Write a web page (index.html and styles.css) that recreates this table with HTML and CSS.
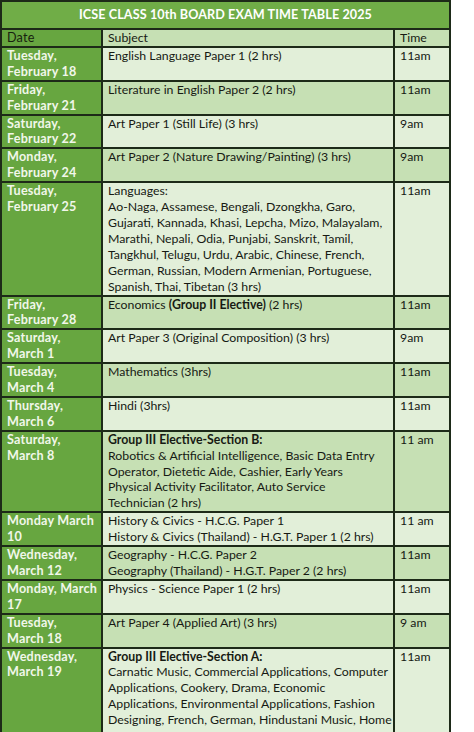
FILE: index.html
```html
<!DOCTYPE html>
<html>
<head>
<meta charset="utf-8">
<link rel="stylesheet" href="styles.css">
</head>
<body>
<table class="tt">
  <colgroup>
    <col class="c-date">
    <col class="c-subj">
    <col class="c-time">
  </colgroup>
  <tr class="title"><th colspan="3">ICSE CLASS 10th BOARD EXAM TIME TABLE 2025</th></tr>
  <tr class="head dark"><td class="date">Date</td><td>Subject</td><td>Time</td></tr>
  <tr class="light"><td class="date">Tuesday,<br>February 18</td><td>English Language Paper 1 (2 hrs)</td><td>11am</td></tr>
  <tr class="dark"><td class="date">Friday,<br>February 21</td><td>Literature in English Paper 2 (2 hrs)</td><td>11am</td></tr>
  <tr class="light"><td class="date">Saturday,<br>February 22</td><td>Art Paper 1 (Still Life) (3 hrs)</td><td>9am</td></tr>
  <tr class="dark"><td class="date">Monday,<br>February 24</td><td>Art Paper 2 (Nature Drawing/Painting) (3 hrs)</td><td>9am</td></tr>
  <tr class="light"><td class="date">Tuesday,<br>February 25</td><td>Languages:<br>Ao-Naga, Assamese, Bengali, Dzongkha, Garo,<br>Gujarati, Kannada, Khasi, Lepcha, Mizo, Malayalam,<br>Marathi, Nepali, Odia, Punjabi, Sanskrit, Tamil,<br>Tangkhul, Telugu, Urdu, Arabic, Chinese, French,<br>German, Russian, Modern Armenian, Portuguese,<br>Spanish, Thai, Tibetan (3 hrs)</td><td>11am</td></tr>
  <tr class="dark"><td class="date">Friday,<br>February 28</td><td>Economics <b>(Group II Elective)</b> (2 hrs)</td><td>11am</td></tr>
  <tr class="light"><td class="date">Saturday,<br>March 1</td><td>Art Paper 3 (Original Composition) (3 hrs)</td><td>9am</td></tr>
  <tr class="dark"><td class="date">Tuesday,<br>March 4</td><td>Mathematics (3hrs)</td><td>11am</td></tr>
  <tr class="light"><td class="date">Thursday,<br>March 6</td><td>Hindi (3hrs)</td><td>11am</td></tr>
  <tr class="dark"><td class="date">Saturday,<br>March 8</td><td><b>Group III Elective-Section B:</b><br>Robotics &amp; Artificial Intelligence, Basic Data Entry<br>Operator, Dietetic Aide, Cashier, Early Years<br>Physical Activity Facilitator, Auto Service<br>Technician (2 hrs)</td><td>11 am</td></tr>
  <tr class="light"><td class="date">Monday March<br>10</td><td>History &amp; Civics - H.C.G. Paper 1<br>History &amp; Civics (Thailand) - H.G.T. Paper 1 (2 hrs)</td><td>11 am</td></tr>
  <tr class="dark"><td class="date">Wednesday,<br>March 12</td><td>Geography - H.C.G. Paper 2<br>Geography (Thailand) - H.G.T. Paper 2 (2 hrs)</td><td>11am</td></tr>
  <tr class="light"><td class="date">Monday, March<br>17</td><td>Physics - Science Paper 1 (2 hrs)</td><td>11am</td></tr>
  <tr class="dark"><td class="date">Tuesday,<br>March 18</td><td>Art Paper 4 (Applied Art) (3 hrs)</td><td>9 am</td></tr>
  <tr class="light last"><td class="date">Wednesday,<br>March 19</td><td><b>Group III Elective-Section A:</b><br>Carnatic Music, Commercial Applications, Computer<br>Applications, Cookery, Drama, Economic<br>Applications, Environmental Applications, Fashion<br>Designing, French, German, Hindustani Music, Home</td><td>11am</td></tr>
</table>
</body>
</html>
```

FILE: styles.css
```css
html, body {
  margin: 0;
  padding: 0;
  background: #ffffff;
}

body {
  height: 732px;
  overflow: hidden;
}

.tt {
  border-collapse: collapse;
  width: 449px;
  table-layout: fixed;
  font-family: "Lato", "Liberation Sans", sans-serif;
  font-size: 12.3px;
  line-height: 15.9px;
  color: #161a13;
}

.c-date { width: 101px; }
.c-subj { width: 292px; }
.c-time { width: 56px; }

.tt th,
.tt td {
  border: 2px solid #1d2a18;
  padding: 0 5px;
  vertical-align: top;
  text-align: left;
  white-space: nowrap;
}

.title th {
  background: #70ad47;
  color: #ffffff;
  font-size: 12.6px;
  font-weight: bold;
  text-align: center;
  height: 26px;
  vertical-align: middle;
  letter-spacing: 0.1px;
}

.light td { background: #e2efd9; }
.dark td { background: #c6e0b4; }

.last td { padding-bottom: 4px; }

.tt td.date {
  background: #67a640;
  color: #f1f7ea;
  font-size: 12.6px;
  font-weight: bold;
  letter-spacing: 0.2px;
}

.head td { font-weight: normal; }
.head td.date {
  color: #17210f;
  font-weight: normal;
}
```
